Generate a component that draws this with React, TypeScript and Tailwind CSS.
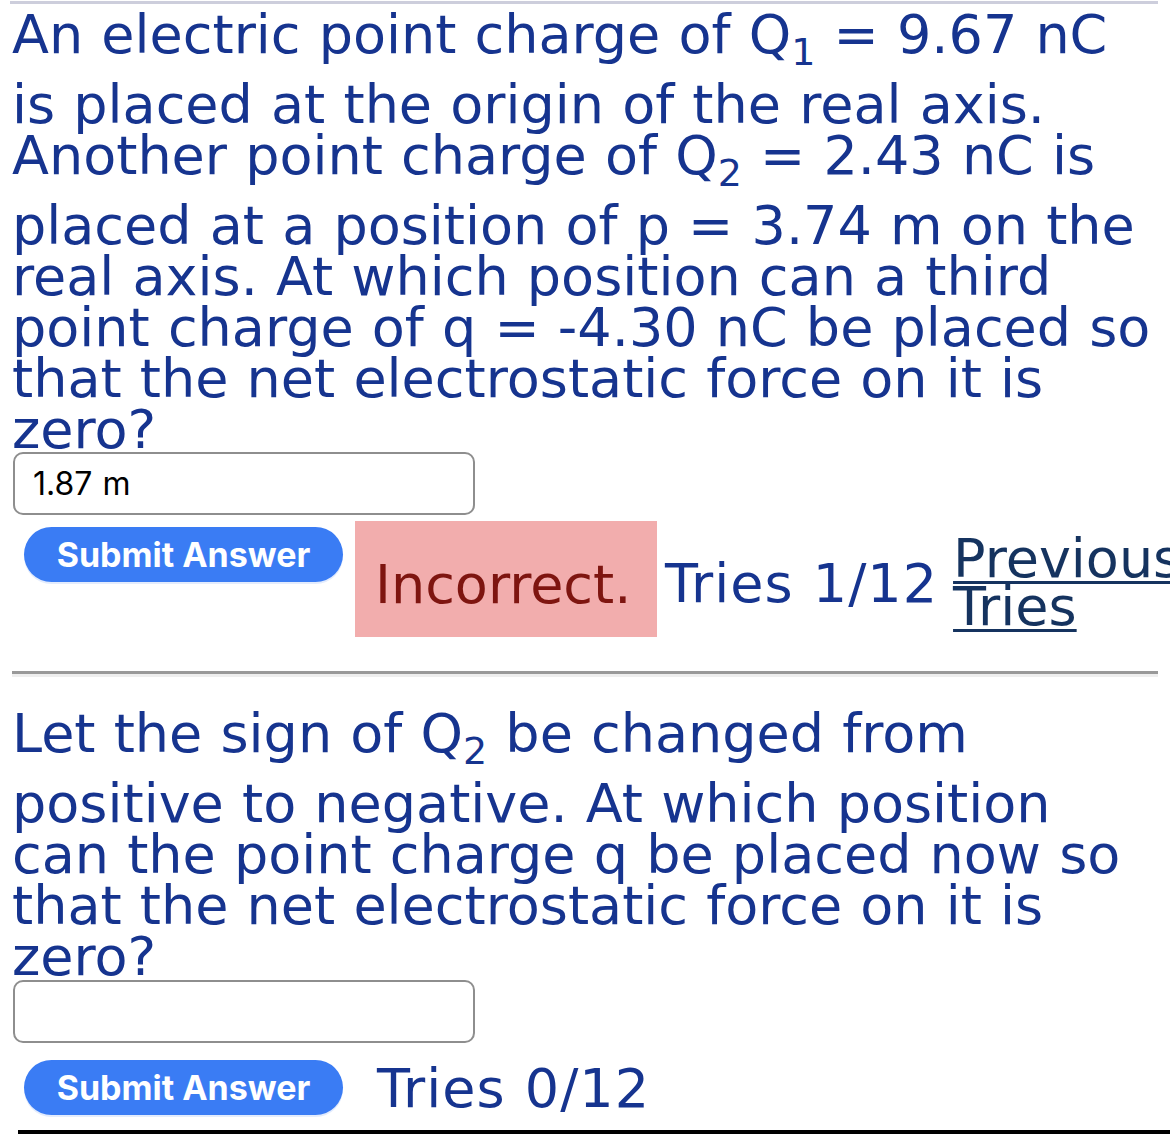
import React from 'react';

const ink = 'text-[#16348f]';

function Sub({ children }: { children: React.ReactNode }) {
  // subscripts are shifted down without growing the line box; the line gets extra margin instead
  return <span className="relative top-[12px] text-[38px] leading-none">{children}</span>;
}

function AnswerBox({ value }: { value?: string }) {
  return (
    <div className="w-[462px] h-[63px] rounded-[10px] border-2 border-[#8e8e8e] bg-white flex items-center pl-[18px] font-['Inter',sans-serif] text-[32px] text-black">
      {value}
    </div>
  );
}

function SubmitButton() {
  return (
    <button className="block shrink-0 w-[319px] h-[55px] rounded-full bg-[#3a7cf4] text-white font-['Inter',sans-serif] font-bold text-[34px] leading-none shadow-[0_2px_0_#e3ecfd]">
      Submit Answer
    </button>
  );
}

export default function App() {
  return (
    <div className={`w-[1170px] h-[1135px] overflow-hidden bg-white font-['DejaVu_Sans',sans-serif] [word-spacing:1px] ${ink}`}>
      <div className="ml-[10px] mt-[1px] w-[1148px] h-[3px] bg-[#cdcedc]" />

      {/* part one */}
      <div className="pl-[12px] pt-[5px] text-[54px] leading-[51px] whitespace-nowrap">
        <div className="mb-[19px]">
          An electric point charge of Q<Sub>1</Sub> = 9.67 nC
        </div>
        <div>is placed at the origin of the real axis.</div>
        <div className="mb-[19px]">
          Another point charge of Q<Sub>2</Sub> = 2.43 nC is
        </div>
        <div>placed at a position of p = 3.74 m on the</div>
        <div>real axis. At which position can a third</div>
        <div>point charge of q = -4.30 nC be placed so</div>
        <div>that the net electrostatic force on it is</div>
        <div>zero?</div>
      </div>

      <div className="pl-[13px] -mt-[3px]">
        <AnswerBox value="1.87 m" />
      </div>

      <div className="flex items-start pl-[24px] mt-[6px] whitespace-nowrap text-[54px]">
        <div className="mt-[6px] shrink-0">
          <SubmitButton />
        </div>
        <div className="shrink-0 ml-[12px] w-[302px] h-[116px] bg-[#f2adad] text-[#7e1510] pt-[38px] pl-[20px] leading-[51px]">
          Incorrect.
        </div>
        <div className="shrink-0 ml-[8px] mt-[37px] leading-[51px] tracking-[1px]">Tries 1/12</div>
        <a href="#" className="shrink-0 ml-[15px] mt-[14px] leading-[48px] text-[#15335f] underline decoration-[3px] underline-offset-[4px]">
          Previous
          <br />
          Tries
        </a>
      </div>

      <div className="ml-[12px] mt-[34px] w-[1146px] h-[3px] bg-[#999999]" />
      <div className="ml-[12px] w-[1146px] h-[3px] bg-[#eeeeee]" />

      {/* part two */}
      <div className="pl-[12px] mt-[31px] text-[54px] leading-[51px] whitespace-nowrap">
        <div className="mb-[19px]">
          Let the sign of Q<Sub>2</Sub> be changed from
        </div>
        <div>positive to negative. At which position</div>
        <div>can the point charge q be placed now so</div>
        <div>that the net electrostatic force on it is</div>
        <div>zero?</div>
      </div>

      <div className="pl-[13px] -mt-[2px]">
        <AnswerBox />
      </div>

      <div className="flex items-center pl-[24px] mt-[17px] whitespace-nowrap">
        <SubmitButton />
        <div className="ml-[34px] text-[54px] leading-[51px] mt-[2px] tracking-[1px]">Tries 0/12</div>
      </div>

      <div className="ml-[18px] mt-[15px] h-[4px] bg-black" />
    </div>
  );
}
